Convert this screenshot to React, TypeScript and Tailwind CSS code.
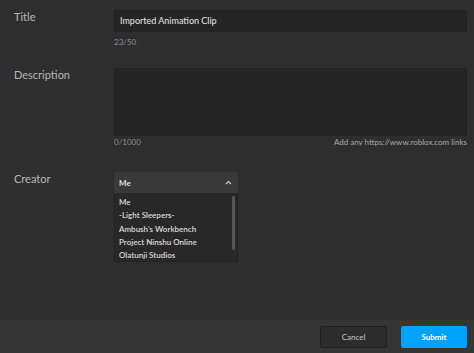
import React from "react";

export default function App() {
  const items = ["Me", "-Light Sleepers-", "Ambush's Workbench", "Project Ninshu Online", "Olatunji Studios"];
  return (
    <div className="w-[474px] h-[353px] bg-[#2e2e2e] flex flex-col font-['Lato',sans-serif] overflow-hidden">
      <div className="flex-1 pl-[14px] pr-[7px] pt-[10px]">
        {/* Title */}
        <div className="flex">
          <div className="w-[100px] text-[11px] leading-[14px] text-[#b8b8b8]">Title</div>
          <div className="flex-1">
            <div className="h-[22px] bg-[#252525] border border-[#222] flex items-center pl-[5px] text-[9px] text-[#e6e6e6]">
              Imported Animation Clip
            </div>
            <div className="mt-[4px] text-[8px] leading-[12px] text-[#8a8a8a]">23/50</div>
          </div>
        </div>
        {/* Description */}
        <div className="flex mt-[20px]">
          <div className="w-[100px] text-[11px] leading-[14px] text-[#b8b8b8]">Description</div>
          <div className="flex-1">
            <div className="h-[68px] bg-[#252525] border border-[#222]" />
            <div className="flex justify-between text-[8px] leading-[12px] text-[#8a8a8a]">
              <span>0/1000</span>
              <span className="text-[#a8a8a8]">Add any https://www.roblox.com links</span>
            </div>
          </div>
        </div>
        {/* Creator */}
        <div className="flex mt-[24px]">
          <div className="w-[100px] text-[11px] leading-[14px] text-[#b8b8b8]">Creator</div>
          <div className="w-[124px]">
            <div className="h-[21px] bg-[#393939] flex items-center justify-between pl-[5px] pr-[6px] text-[8px] font-bold text-[#e0e0e0]">
              <span>Me</span>
              <svg width="7" height="5" viewBox="0 0 7 5" fill="none">
                <path d="M1 4 L3.5 1.5 L6 4" stroke="#cfcfcf" strokeWidth="1.1" />
              </svg>
            </div>
            <div className="relative h-[69px] bg-[#282828] border border-[#222] border-t-0 pt-[3px] pl-[4px]">
              {items.map((it) => (
                <div key={it} className="h-[13.3px] leading-[13.3px] text-[8px] text-[#dcdcdc] font-semibold">
                  {it}
                </div>
              ))}
              <div className="absolute right-[2px] top-[3px] w-[3px] h-[54px] bg-[#555] rounded-[1px]" />
            </div>
          </div>
        </div>
      </div>
      <div className="h-[33px] bg-[#353535] flex items-center justify-end gap-[14px] pr-[7px] pt-[1px]">
        <button className="w-[67px] h-[22px] bg-[#2c2c2c] border border-[#1f1f1f] rounded-[2px] text-[8px] text-[#c8c8c8]">
          Cancel
        </button>
        <button className="w-[66px] h-[22px] bg-[#00a2ff] rounded-[2px] text-[8px] font-bold text-white">
          Submit
        </button>
      </div>
    </div>
  );
}
